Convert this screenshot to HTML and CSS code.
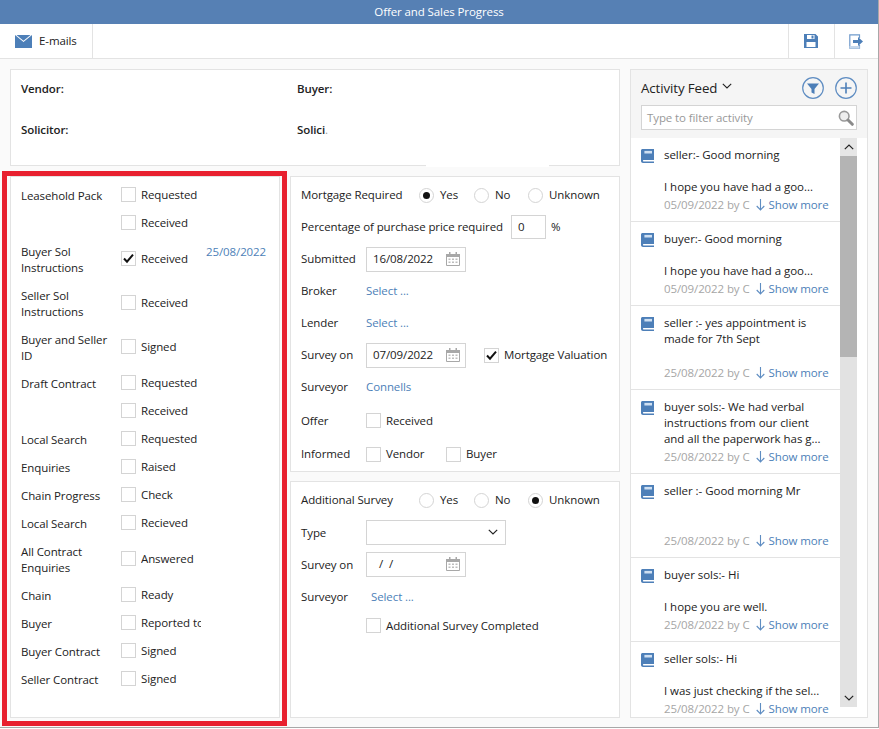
FILE: index.html
```html
<!DOCTYPE html>
<html lang="en">
<head>
<meta charset="utf-8">
<title>Offer and Sales Progress</title>
<link rel="stylesheet" href="styles.css">
</head>
<body>
<svg class="defs" width="0" height="0" aria-hidden="true">
  <symbol id="book" viewBox="0 0 13 14">
    <path fill="#4d7fb8" d="M1.5 0H13v11H2.6c-.9 0-.9 1.6 0 1.6H13V14H2C.9 14 0 13.2 0 12V1.5C0 .7.7 0 1.5 0z"/>
    <rect x="3.4" y="1.9" width="7.6" height="2.6" fill="#cfe0f2"/>
  </symbol>
  <symbol id="cal" viewBox="0 0 14 14">
    <path fill="none" stroke="#a8a8a8" d="M.5 2.5h13v11H.5z"/>
    <path fill="#a8a8a8" d="M0 2h14v3H0zM3 0h1.500v2H3zM9.500 0H11v2H9.500z"/>
    <path fill="#bdbdbd" d="M2.500 6.500h2v1.500h-2zM6 6.500h2v1.500H6zM9.500 6.500h2v1.500h-2zM2.500 9.500h2V11h-2zM6 9.500h2V11H6zM9.500 9.500h2V11h-2z"/>
  </symbol>
  <symbol id="tick" viewBox="0 0 15 15">
    <path fill="none" stroke="#111" stroke-width="2" d="M3 7.500l3 3.200 6-7"/>
  </symbol>
  <symbol id="down" viewBox="0 0 9 12">
    <path fill="none" stroke="#5f8dc2" stroke-width="1.100" d="M4.500 0v11M.7 7l3.800 4 3.800-4"/>
  </symbol>
</svg>
<div class="window">
  <header class="titlebar">Offer and Sales Progress</header>
  <nav class="toolbar">
    <div class="tool tool-mail">
      <svg width="17" height="13" viewBox="0 0 17 13"><path fill="#4d7fb8" d="M0 0l8.500 7L17 0v13H0z"/><path fill="#4d7fb8" d="M1.500 0h14L8.500 5.700z"/></svg>
      <span>E-mails</span>
    </div>
    <div class="tool-spacer"></div>
    <div class="tool tool-icon">
      <svg width="14" height="14" viewBox="0 0 14 14"><path fill="#4d7fb8" fill-rule="evenodd" d="M0 0h11.500L14 2.500V14H0zM3 1v4h7.500V1zM2.500 8v5h9V8zM7.500 1.500h2v3h-2z"/></svg>
    </div>
    <div class="tool tool-icon tool-last">
      <svg width="14" height="15" viewBox="0 0 14 15"><path fill="none" stroke="#6f9acb" stroke-width="1.200" d="M10.500 4V.8H.8v13.400h9.700V11"/><path fill="#c5d7eb" d="M.5 12h10v2.500H.5z"/><path fill="#4d7fb8" d="M4 6h5V3l5 4.500L9 12V9H4z"/></svg>
    </div>
  </nav>
  <main class="content">
    <div class="col-main">
      <section class="panel parties">
        <div class="party"><b>Vendor:</b></div>
        <div class="party"><b>Buyer:</b></div>
        <div class="party"><b>Solicitor:</b></div>
        <div class="party"><b>Solici</b><span class="faint">.</span></div>
        <span class="patch"></span>
      </section>
      <div class="col-lower">
        <section class="panel checklist">
          <div class="cl-row"><span class="cl-label">Leasehold Pack</span><span class="box"></span><span class="cl-val">Requested</span></div>
          <div class="cl-row"><span class="cl-label"></span><span class="box"></span><span class="cl-val">Received</span></div>
          <div class="cl-row tall"><span class="cl-label">Buyer Sol Instructions</span><span class="box"><svg width="15" height="15"><use href="#tick"/></svg></span><span class="cl-val">Received</span><span class="cl-date">25/08/2022</span></div>
          <div class="cl-row tall"><span class="cl-label">Seller Sol Instructions</span><span class="box"></span><span class="cl-val">Received</span></div>
          <div class="cl-row tall"><span class="cl-label">Buyer and Seller ID</span><span class="box"></span><span class="cl-val">Signed</span></div>
          <div class="cl-row"><span class="cl-label">Draft Contract</span><span class="box"></span><span class="cl-val">Requested</span></div>
          <div class="cl-row"><span class="cl-label"></span><span class="box"></span><span class="cl-val">Received</span></div>
          <div class="cl-row"><span class="cl-label">Local Search</span><span class="box"></span><span class="cl-val">Requested</span></div>
          <div class="cl-row"><span class="cl-label">Enquiries</span><span class="box"></span><span class="cl-val">Raised</span></div>
          <div class="cl-row"><span class="cl-label">Chain Progress</span><span class="box"></span><span class="cl-val">Check</span></div>
          <div class="cl-row"><span class="cl-label">Local Search</span><span class="box"></span><span class="cl-val">Recieved</span></div>
          <div class="cl-row tall"><span class="cl-label">All Contract Enquiries</span><span class="box"></span><span class="cl-val">Answered</span></div>
          <div class="cl-row"><span class="cl-label">Chain</span><span class="box"></span><span class="cl-val">Ready</span></div>
          <div class="cl-row"><span class="cl-label">Buyer</span><span class="box"></span><span class="cl-val">Reported to</span></div>
          <div class="cl-row"><span class="cl-label">Buyer Contract</span><span class="box"></span><span class="cl-val">Signed</span></div>
          <div class="cl-row"><span class="cl-label">Seller Contract</span><span class="box"></span><span class="cl-val">Signed</span></div>
        </section>
        <div class="col-forms">
          <section class="panel form form-mortgage">
            <div class="f-row">
              <span class="f-wide">Mortgage Required</span>
              <span class="radios"><span class="radio on"></span><span class="r-yes">Yes</span><span class="radio"></span><span class="r-no">No</span><span class="radio"></span><span>Unknown</span></span>
            </div>
            <div class="f-row"><span class="pct-label">Percentage of purchase price required</span><span class="input pct">0</span><span class="pct-sign">%</span></div>
            <div class="f-row"><span class="f-label">Submitted</span><span class="input date">16/08/2022<svg width="14" height="14"><use href="#cal"/></svg></span></div>
            <div class="f-row"><span class="f-label">Broker</span><span class="link">Select ...</span></div>
            <div class="f-row"><span class="f-label">Lender</span><span class="link">Select ...</span></div>
            <div class="f-row"><span class="f-label">Survey on</span><span class="input date">07/09/2022<svg width="14" height="14"><use href="#cal"/></svg></span><span class="box val-box"><svg width="15" height="15"><use href="#tick"/></svg></span><span>Mortgage Valuation</span></div>
            <div class="f-row"><span class="f-label">Surveyor</span><span class="link">Connells</span></div>
            <div class="f-row f-offer"><span class="f-label">Offer</span><span class="box"></span><span class="box-text">Received</span></div>
            <div class="f-row f-informed"><span class="f-label">Informed</span><span class="box"></span><span class="box-text vendor">Vendor</span><span class="box"></span><span class="box-text">Buyer</span></div>
          </section>
          <section class="panel form form-survey">
            <div class="f-row">
              <span class="f-wide">Additional Survey</span>
              <span class="radios"><span class="radio"></span><span class="r-yes">Yes</span><span class="radio"></span><span class="r-no">No</span><span class="radio on"></span><span>Unknown</span></span>
            </div>
            <div class="f-row"><span class="f-label">Type</span><span class="input select"><svg width="10" height="6" viewBox="0 0 10 6"><path fill="none" stroke="#222" stroke-width="1.200" d="M.8.800L5 5l4.200-4.200"/></svg></span></div>
            <div class="f-row"><span class="f-label">Survey on</span><span class="input date empty">/&nbsp;&nbsp;/<svg width="14" height="14"><use href="#cal"/></svg></span></div>
            <div class="f-row"><span class="f-label">Surveyor</span><span class="link shifted">Select ...</span></div>
            <div class="f-row f-done"><span class="f-label"></span><span class="box"></span><span class="box-text">Additional Survey Completed</span></div>
          </section>
        </div>
      </div>
      <span class="annotation"></span>
    </div>
    <aside class="panel feed">
      <div class="feed-head">
        <div class="feed-top">
          <span class="feed-title">Activity Feed</span>
          <svg class="feed-caret" width="10" height="6" viewBox="0 0 10 6"><path fill="none" stroke="#222" stroke-width="1.100" d="M.8.800L5 5l4.200-4.200"/></svg>
          <svg class="feed-btn" width="22" height="22" viewBox="0 0 22 22"><circle cx="11" cy="11" r="10.300" fill="none" stroke="#5f8dc2" stroke-width="1.200"/><path fill="#4d7fb8" d="M5 6.500h12l-4.500 5.500v5l-3-1.600V12z"/></svg>
          <svg class="feed-btn" width="22" height="22" viewBox="0 0 22 22"><circle cx="11" cy="11" r="10.300" fill="none" stroke="#5f8dc2" stroke-width="1.200"/><path fill="none" stroke="#4d7fb8" stroke-width="1.600" d="M11 5.500v11M5.500 11h11"/></svg>
        </div>
        <div class="feed-search">
          <span>Type to filter activity</span>
          <svg width="16" height="16" viewBox="0 0 16 16"><circle cx="6.200" cy="6.200" r="4.800" fill="#eee" stroke="#999" stroke-width="1.600"/><path stroke="#8a8a8a" stroke-width="3" stroke-linecap="round" d="M10 10l4.300 4.300"/></svg>
        </div>
      </div>
      <div class="feed-body">
        <div class="feed-list">
          <article class="item"><svg class="book" width="13" height="14"><use href="#book"/></svg><div class="item-main"><p class="item-text">seller:- Good morning<br><br><span class="ell">I hope you have had a goo...</span></p><p class="item-meta"><span>05/09/2022 by C</span><svg width="9" height="12"><use href="#down"/></svg><span class="more">Show more</span></p></div></article>
          <article class="item"><svg class="book" width="13" height="14"><use href="#book"/></svg><div class="item-main"><p class="item-text">buyer:- Good morning<br><br><span class="ell">I hope you have had a goo...</span></p><p class="item-meta"><span>05/09/2022 by C</span><svg width="9" height="12"><use href="#down"/></svg><span class="more">Show more</span></p></div></article>
          <article class="item"><svg class="book" width="13" height="14"><use href="#book"/></svg><div class="item-main"><p class="item-text">seller :- yes appointment is<br>made for 7th Sept</p><p class="item-meta"><span>25/08/2022 by C</span><svg width="9" height="12"><use href="#down"/></svg><span class="more">Show more</span></p></div></article>
          <article class="item"><svg class="book" width="13" height="14"><use href="#book"/></svg><div class="item-main"><p class="item-text">buyer sols:- We had verbal<br>instructions from our client<br>and all the paperwork has g...</p><p class="item-meta"><span>25/08/2022 by C</span><svg width="9" height="12"><use href="#down"/></svg><span class="more">Show more</span></p></div></article>
          <article class="item"><svg class="book" width="13" height="14"><use href="#book"/></svg><div class="item-main"><p class="item-text">seller :- Good morning Mr</p><p class="item-meta"><span>25/08/2022 by C</span><svg width="9" height="12"><use href="#down"/></svg><span class="more">Show more</span></p></div></article>
          <article class="item"><svg class="book" width="13" height="14"><use href="#book"/></svg><div class="item-main"><p class="item-text">buyer sols:- Hi<br><br>I hope you are well.</p><p class="item-meta"><span>25/08/2022 by C</span><svg width="9" height="12"><use href="#down"/></svg><span class="more">Show more</span></p></div></article>
          <article class="item"><svg class="book" width="13" height="14"><use href="#book"/></svg><div class="item-main"><p class="item-text">seller sols:- Hi<br><br>I was just checking if the sel...</p><p class="item-meta"><span>25/08/2022 by C</span><svg width="9" height="12"><use href="#down"/></svg><span class="more">Show more</span></p></div></article>
        </div>
        <div class="scrollbar">
          <span class="sb-btn"><svg width="10" height="6" viewBox="0 0 10 6"><path fill="none" stroke="#222" stroke-width="1.200" d="M.8 5.200L5 1l4.200 4.200"/></svg></span>
          <span class="sb-thumb"></span>
          <span class="sb-track"></span>
          <span class="sb-btn sb-end"><svg width="10" height="6" viewBox="0 0 10 6"><path fill="none" stroke="#222" stroke-width="1.200" d="M.8.800L5 5l4.200-4.200"/></svg></span>
        </div>
      </div>
    </aside>
  </main>
</div>
</body>
</html>
```

FILE: styles.css
```css
* { box-sizing: border-box; }
html, body { margin: 0; padding: 0; }
body {
  width: 879px;
  height: 729px;
  overflow: hidden;
  background: #fff;
  color: #222;
  font: 11.5px/16px "Open Sans", "Noto Sans", sans-serif;
  letter-spacing: -0.1px;
}
p { margin: 0; }
.defs { position: absolute; }
.window {
  height: 728px;
  display: flex;
  flex-direction: column;
  background: #fafafa;
  border-right: 1px solid #a8a8a8;
  border-bottom: 1px solid #a8a8a8;
}
.titlebar {
  height: 24px;
  flex: none;
  background: #5680b4;
  color: #fff;
  line-height: 24px;
  text-align: center;
}
.toolbar {
  height: 35px;
  flex: none;
  display: flex;
  background: #fff;
  border-bottom: 1px solid #e3e3e3;
}
.tool { flex: none; display: flex; align-items: center; justify-content: center; border-right: 1px solid #e3e3e3; }
.tool-mail { width: 93px; gap: 7px; justify-content: flex-start; padding-left: 15px; }
.tool-spacer { flex: none; width: 696px; border-right: 1px solid #e3e3e3; }
.tool-icon { width: 46px; padding-right: 1px; }
.tool-last { width: 43px; border-right: 0; }

.content {
  flex: 1;
  display: flex;
  gap: 10px;
  padding: 10px 10px 9px;
  min-height: 0;
}
.panel { background: #fff; border: 1px solid #e3e3e3; }
.col-main { width: 610px; display: flex; flex-direction: column; gap: 10px; position: relative; }
.parties {
  height: 97px;
  flex: none;
  position: relative;
  display: grid;
  grid-template-columns: 276px 1fr;
  grid-auto-rows: 41px;
  padding: 11px 10px 0;
}
.party b { font-weight: 600; }
.party .faint { color: #999; }
.patch {
  position: absolute;
  left: 415px;
  bottom: -2px;
  width: 123px;
  height: 3px;
  background: #fff;
}
.col-lower { flex: 1; display: flex; gap: 10px; min-height: 0; }
.checklist { width: 270px; flex: none; padding: 4px 10px 0; }
.cl-row { height: 28px; display: flex; align-items: center; }
.cl-row.tall { height: 44px; }
.cl-label { width: 100px; flex: none; padding-top: 1px; }
.cl-val { width: 60px; flex: none; margin-left: 5px; white-space: nowrap; overflow: hidden; margin-top: -1px; }
.cl-date { color: #4d7fb8; margin-left: 5px; margin-top: -14px; white-space: nowrap; }
.box { width: 15px; height: 15px; flex: none; border: 1px solid #d4d4d4; background: #fff; display: block; position: relative; }
.checklist .box { margin-top: -1px; }
.box svg { display: block; margin: -1px; }

.col-forms { flex: 1; display: flex; flex-direction: column; gap: 9px; min-width: 0; }
.form { padding: 2px 10px 0; }
.form-mortgage { height: 296px; flex: none; }
.form-survey { flex: 1; }
.form-survey .f-label { padding-top: 2px; }
.form-survey .link, .form-survey .box-text { padding-top: 2px; }
.f-row { height: 32px; display: flex; align-items: center; white-space: nowrap; }
.f-label { width: 65px; flex: none; }
.f-wide { width: 118px; flex: none; }
.radios { display: flex; align-items: center; }
.radio { width: 15px; height: 15px; border: 1px solid #d4d4d4; border-radius: 50%; background: #fff; margin-right: 6px; position: relative; flex: none; }
.radio.on::after { content: ""; position: absolute; left: 3px; top: 3px; width: 7px; height: 7px; border-radius: 50%; background: #111; }
.r-yes { width: 34px; }
.r-no { width: 33px; }
.pct-label { width: 210px; flex: none; }
.input { border: 1px solid #d4d4d4; background: #fff; display: flex; align-items: center; flex: none; }
.pct { width: 35px; height: 24px; padding-left: 6px; }
.pct-sign { margin-left: 5px; }
.date { width: 100px; height: 25px; padding: 0 5px 0 6px; justify-content: space-between; }
.date.empty { padding-left: 12px; }
.select { width: 140px; height: 25px; justify-content: flex-end; padding-right: 7px; }
.link { color: #4d7fb8; }
.shifted { margin-left: 5px; }
.val-box { margin: 0 5px 0 18px; }
.box-text { margin-left: 5px; }
.vendor { width: 60px; flex: none; }
.f-offer { height: 35px; }
.f-informed { height: 32px; }
.f-done { height: 26px; }

.feed { width: 238px; flex: none; display: flex; flex-direction: column; min-height: 0; }
.feed-head { height: 68px; flex: none; background: #f5f5f5; padding: 6px 10px 0; }
.feed-top { height: 23px; display: flex; align-items: center; }
.feed-title { font-size: 13.3px; line-height: 20px; margin-top: 1px; white-space: nowrap; }
.feed-caret { margin-left: 5px; margin-right: 0; margin-top: -3px; }
.feed-btn { margin-left: 11px; flex: none; }
.feed-caret + .feed-btn { margin-left: auto; }
.feed-search {
  margin-top: 6px;
  width: 216px;
  height: 25px;
  border: 1px solid #d4d4d4;
  background: #fff;
  color: #999;
  padding: 0 2px 0 5px;
  display: flex;
  align-items: center;
  justify-content: space-between;
}
.feed-body { flex: 1; display: flex; min-height: 0; padding-right: 10px; }
.feed-list { width: 209px; flex: none; overflow: hidden; }
.item { height: 84px; display: flex; padding: 11px 0 0 10px; border-bottom: 1px solid #e3e3e3; overflow: hidden; }
.book { flex: none; margin-right: 10px; }
.item-main { flex: 1; display: flex; flex-direction: column; min-width: 0; }
.item-text { height: 48px; margin-top: -2px; white-space: nowrap; letter-spacing: -0.04px; }
.item-meta { margin-top: 2px; color: #a6a6a6; display: flex; align-items: center; white-space: nowrap; }
.item-meta svg { margin: 0 4px 0 6px; flex: none; }
.more { color: #4d7fb8; }
.scrollbar { width: 17px; flex: none; display: flex; flex-direction: column; margin-bottom: 10px; background: #e2e2e2; }
.sb-btn { height: 18px; flex: none; background: #e6e6e6; display: flex; align-items: center; justify-content: center; }
.sb-end { background: #e2e2e2; }
.sb-thumb { height: 201px; flex: none; background: #b4b4b4; }
.sb-track { flex: 1; }

.annotation {
  position: absolute;
  left: -8px;
  top: 102px;
  width: 285px;
  height: 555px;
  border: 5px solid #e8202f;
  pointer-events: none;
}
```
